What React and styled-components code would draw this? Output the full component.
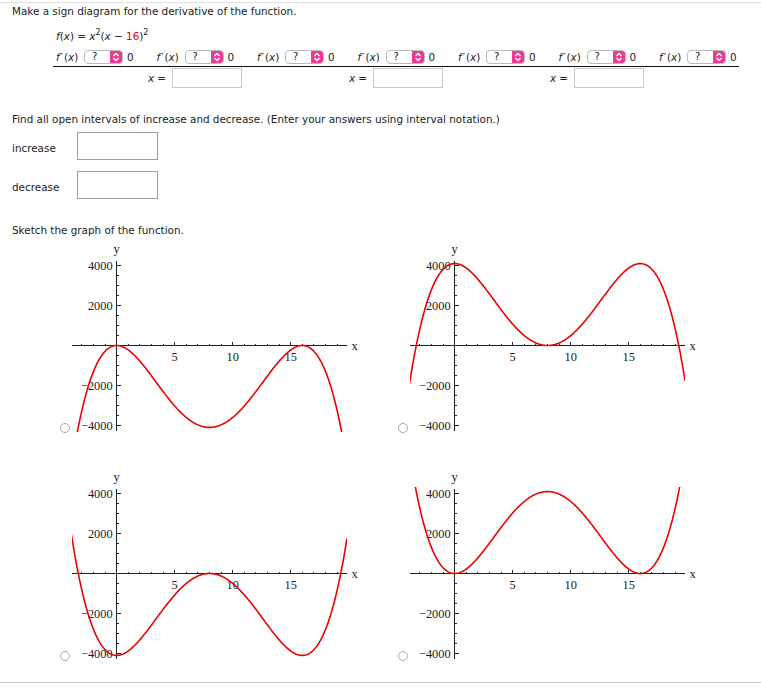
import styled, { createGlobalStyle } from 'styled-components';

const GlobalStyle = createGlobalStyle`
  body {
    margin: 0;
    background: #fff;
    font-family: "DejaVu Sans", Verdana, sans-serif;
    font-size: 10.4px;
    color: #222;
  }
`;

// graph scale: 11.6px per x unit, 0.02px per y unit
const OX = 46.7;
const OY = 104.5;
const SX = 11.6;
const SY = 0.02;
const sx = (x) => OX + x * SX;
const sy = (y) => OY - y * SY;

const f = (x) => x * x * (x - 16) * (x - 16);
const curves = [
  (x) => -f(x),
  (x) => 4096 - f(x),
  (x) => f(x) - 4096,
  (x) => f(x),
];

const buildPath = (fn) => {
  let d = '';
  for (let x = -3.9; x <= 19.9; x += 0.05) {
    let y = fn(x);
    y = Math.max(-9000, Math.min(9000, y));
    d += (d ? 'L' : 'M') + sx(x).toFixed(2) + ' ' + sy(y).toFixed(2);
  }
  return d;
};

const Graph = ({ fn, id }) => {
  const xMinor = [];
  for (let i = -3; i <= 19; i++) {
    if (i === 0) continue;
    const major = i % 5 === 0;
    xMinor.push(
      <line key={'x' + i} x1={sx(i)} x2={sx(i)} y1={OY} y2={OY - (major ? 4 : 2)} />
    );
  }
  const yMinor = [];
  for (let v = -4000; v <= 4000; v += 500) {
    if (v === 0) continue;
    const major = v % 2000 === 0;
    yMinor.push(
      <line key={'y' + v} x1={OX} x2={OX + (major ? 4 : 2)} y1={sy(v)} y2={sy(v)} />
    );
  }
  return (
    <svg width="290" height="195" viewBox="0 0 290 195">
      <defs>
        <clipPath id={id}>
          <rect x="2" y="18" width="275" height="173" />
        </clipPath>
      </defs>
      <g stroke="#222" strokeWidth="1" shapeRendering="crispEdges">
        <line x1="2" x2="277" y1={OY} y2={OY} />
        <line x1={OX} x2={OX} y1="20" y2="190" />
        {xMinor}
        {yMinor}
      </g>
      <g fontFamily='"Liberation Serif", "Times New Roman", serif' fontSize="12.4" fill="#222">
        {[4000, 2000, -2000, -4000].map((v) => (
          <text key={v} x={OX - 4} y={sy(v) + 4} textAnchor="end">
            {v < 0 ? '\u2212' + Math.abs(v) : v}
          </text>
        ))}
        {[5, 10, 15].map((v) => (
          <text key={v} x={sx(v)} y={OY + 15} textAnchor="middle">{v}</text>
        ))}
        <text x={OX + 238} y={OY + 4} textAnchor="middle">x</text>
        <text x={OX} y="12" textAnchor="middle">y</text>
      </g>
      <path d={buildPath(fn)} clipPath={`url(#${id})`} fill="none" stroke="#ee0000" strokeWidth="1.6" />
    </svg>
  );
};

const Chevrons = () => (
  <svg width="8" height="10" viewBox="0 0 8 10">
    <polyline points="1.5,4 4,1.5 6.5,4" fill="none" stroke="#fff" strokeWidth="1.3" />
    <polyline points="1.5,6 4,8.5 6.5,6" fill="none" stroke="#fff" strokeWidth="1.3" />
  </svg>
);

const SignItem = () => (
  <Item>
    <Fx><i>f</i><Prime>′</Prime>(<i>x</i>)</Fx>
    <Select>
      <SelectValue>?</SelectValue>
      <SelectArrow><Chevrons /></SelectArrow>
    </Select>
    <span>0</span>
  </Item>
);

const App = () => {
  return (
    <Page>
      <GlobalStyle />
      <Title>Make a sign diagram for the derivative of the function.</Title>
      <SignBlock>
        <Formula>
          <i>f</i>(<i>x</i>) = <i>x</i><sup>2</sup>(<i>x</i> − <Red>16</Red>)<sup>2</sup>
        </Formula>
        <SignRow>
          {Array.from({ length: 7 }).map((_, i) => <SignItem key={i} />)}
        </SignRow>
        <XRow>
          {[0, 1, 2].map((i) => (
            <XCell key={i}>
              <span><i>x</i> =</span>
              <XInput />
            </XCell>
          ))}
        </XRow>
      </SignBlock>

      <Prompt>Find all open intervals of increase and decrease. (Enter your answers using interval notation.)</Prompt>
      <Answers>
        <AnswerRow>
          <AnswerLabel>increase</AnswerLabel>
          <AnswerBox />
        </AnswerRow>
        <AnswerRow>
          <AnswerLabel>decrease</AnswerLabel>
          <AnswerBox />
        </AnswerRow>
      </Answers>

      <Sketch>Sketch the graph of the function.</Sketch>
      <Graphs>
        {curves.map((fn, i) => (
          <GraphCell key={i}>
            <Radio type="radio" name="graph" />
            <Graph fn={fn} id={'clip' + i} />
          </GraphCell>
        ))}
      </Graphs>
    </Page>
  );
};

const Page = styled.div`
  margin-top: 2px;
  height: 681px;
  box-sizing: border-box;
  border-top: 1px solid #e0e0e0;
  border-bottom: 1px solid #c8c8c8;
  padding: 1px 0 0 12px;
`;

const Title = styled.div`
  line-height: 15px;
`;

const SignBlock = styled.div`
  margin: 10px 0 0 41px;
  width: 686px;
`;

const Formula = styled.div`
  padding-left: 3px;
  line-height: 15px;

  sup {
    font-size: 8px;
    vertical-align: 5px;
    line-height: 0;
  }
`;

const Red = styled.span`
  color: #ee0000;
`;

const SignRow = styled.div`
  display: flex;
  margin-top: 5px;
  padding: 0 0 1px 3px;
  height: 16px;
  border-bottom: 1px solid #111;
`;

const Item = styled.div`
  flex: 0 0 100.5px;
  display: flex;
  align-items: center;
`;

const Fx = styled.span`
  width: 25px;
  margin-right: 3px;
  white-space: nowrap;
`;

const Prime = styled.span`
  margin: 0 1px 0 1px;
`;

const Select = styled.div`
  display: flex;
  width: 39px;
  height: 14px;
  box-sizing: border-box;
  border: 1px solid #bbb;
  border-radius: 4px;
  overflow: hidden;
  margin-right: 4px;
`;

const SelectValue = styled.span`
  flex: 1;
  padding-left: 7px;
  line-height: 12px;
  font-size: 10px;
`;

const SelectArrow = styled.span`
  width: 12px;
  background: #ec3a95;
  display: flex;
  align-items: center;
  justify-content: center;
`;

const XRow = styled.div`
  display: flex;
  margin-top: 1px;
  padding-left: 41.5px;
`;

const XCell = styled.div`
  flex: 0 0 201px;
  display: flex;
  align-items: center;
  justify-content: center;
  gap: 6px;
`;

const XInput = styled.div`
  width: 70px;
  height: 20px;
  box-sizing: border-box;
  border: 1px solid #c8c8c8;
`;

const Prompt = styled.div`
  margin-top: 24px;
  line-height: 15px;
`;

const Answers = styled.div`
  margin-top: 5px;
  display: flex;
  flex-direction: column;
  gap: 11px;
`;

const AnswerRow = styled.div`
  display: flex;
  align-items: center;
`;

const AnswerLabel = styled.span`
  width: 65px;
  padding-top: 3px;
`;

const AnswerBox = styled.div`
  width: 81px;
  height: 28px;
  box-sizing: border-box;
  border: 1px solid #a0a0a0;
`;

const Sketch = styled.div`
  margin-top: 24px;
  line-height: 15px;
`;

const Graphs = styled.div`
  margin: 3px 0 0 48px;
  display: grid;
  grid-template-columns: 300px 300px;
  column-gap: 38px;
  row-gap: 33px;
`;

const GraphCell = styled.div`
  display: flex;
  align-items: flex-end;
`;

const Radio = styled.input`
  appearance: none;
  margin: 0 0 3px 0;
  width: 10px;
  height: 10px;
  border: 1px solid #aaa;
  border-radius: 50%;
  background: #fff;
  flex: 0 0 auto;
`;

export default App;
